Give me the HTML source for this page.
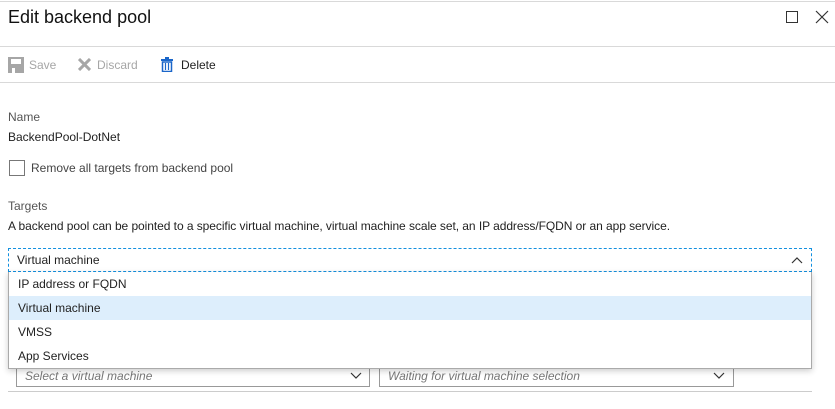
<!DOCTYPE html>
<html><head><style>
*{margin:0;padding:0;box-sizing:border-box}
body{width:835px;height:409px;background:#fff;font-family:"Liberation Sans",sans-serif;color:#222;position:relative;overflow:hidden;font-size:12px}
.a{position:absolute;white-space:nowrap}
.hl{position:absolute;left:0;width:835px;height:1px;background:#d9d9d9}
</style></head><body>
<div class="hl" style="top:1px"></div>
<div class="a" style="left:8px;top:7px;font-size:18px;color:#111">Edit backend pool</div>
<div class="a" style="left:786px;top:11px;width:12px;height:12px;border:1px solid #333"></div>
<svg class="a" style="left:815px;top:10px" width="14" height="14"><path d="M1 1L13 13M13 1L1 13" stroke="#333" stroke-width="1.2"/></svg>
<div class="hl" style="top:46px"></div>
<svg class="a" style="left:8px;top:57px" width="16" height="16"><path d="M0 0H16V16H0Z" fill="#a6a6a6"/><rect x="3" y="2" width="10" height="5" fill="#fff"/><rect x="4" y="11" width="3" height="5" fill="#fff"/></svg>
<div class="a" style="left:29px;top:58px;color:#a6a6a6">Save</div>
<svg class="a" style="left:78px;top:58px" width="13" height="13"><path d="M1 1L12 12M12 1L1 12" stroke="#a6a6a6" stroke-width="3"/></svg>
<div class="a" style="left:97px;top:58px;color:#a6a6a6">Discard</div>
<svg class="a" style="left:161px;top:57px" width="12" height="15"><rect x="0" y="2" width="12" height="2" fill="#1a66c9"/><rect x="4" y="0" width="4" height="2" fill="#1a66c9"/><path d="M1.5 5H10.5V14.5H1.5Z" fill="none" stroke="#1a66c9" stroke-width="1.5"/><path d="M4.5 6V13M7.5 6V13" stroke="#1a66c9" stroke-width="1.2"/></svg>
<div class="a" style="left:181px;top:58px;color:#222">Delete</div>
<div class="hl" style="top:82px"></div>
<div class="a" style="left:8px;top:110px;color:#555">Name</div>
<div class="a" style="left:8px;top:130px;color:#222">BackendPool-DotNet</div>
<div class="a" style="left:9px;top:160px;width:16px;height:16px;border:1px solid #777"></div>
<div class="a" style="left:31px;top:161px;color:#444">Remove all targets from backend pool</div>
<div class="a" style="left:8px;top:199px;color:#555">Targets</div>
<div class="a" style="left:8px;top:219px;color:#222;letter-spacing:-0.06px">A backend pool can be pointed to a specific virtual machine, virtual machine scale set, an IP address/FQDN or an app service.</div>
<div class="a" style="left:16px;top:364px;width:354px;height:23px;border:1px solid #999"></div>
<div class="a" style="left:25px;top:369px;color:#777;font-style:italic">Select a virtual machine</div>
<svg class="a" style="left:350px;top:372px" width="12" height="8"><path d="M1 1L6 6L11 1" fill="none" stroke="#333" stroke-width="1.2"/></svg>
<div class="a" style="left:379px;top:364px;width:355px;height:23px;border:1px solid #999"></div>
<div class="a" style="left:388px;top:369px;color:#777;font-style:italic">Waiting for virtual machine selection</div>
<svg class="a" style="left:713px;top:372px" width="12" height="8"><path d="M1 1L6 6L11 1" fill="none" stroke="#333" stroke-width="1.2"/></svg>
<div class="a" style="left:8px;top:391px;width:804px;height:1px;background:#ccc"></div>
<div class="a" style="left:8px;top:248px;width:804px;height:24px;border:1px dashed #1490df;background:#fff"></div>
<div class="a" style="left:17px;top:253px">Virtual machine</div>
<svg class="a" style="left:791px;top:256px" width="12" height="8"><path d="M1 7L6 2L11 7" fill="none" stroke="#333" stroke-width="1.2"/></svg>
<div class="a" style="left:8px;top:272px;width:804px;height:97px;border:1px solid #aaa;border-top:none;background:#fff;box-shadow:0 2px 6px rgba(0,0,0,.2)">
<div style="height:24px;padding:5px 0 0 9px">IP address or FQDN</div>
<div style="height:24px;padding:5px 0 0 9px;background:#ddeefc">Virtual machine</div>
<div style="height:24px;padding:5px 0 0 9px">VMSS</div>
<div style="height:24px;padding:5px 0 0 9px">App Services</div>
</div>
</body></html>
